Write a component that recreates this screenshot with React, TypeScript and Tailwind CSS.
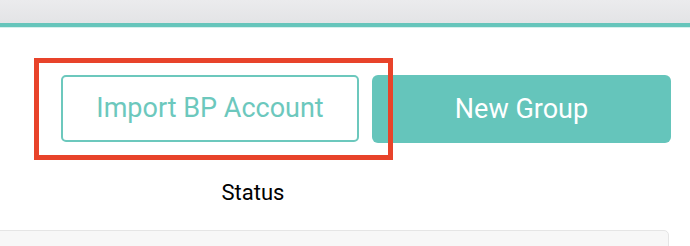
export default function App() {
  return (
    <div className="relative h-[246px] w-[690px] overflow-hidden bg-white" style={{ fontFamily: "Roboto, 'Liberation Sans', sans-serif" }}>
      <div className="h-[23px] bg-gradient-to-b from-[#ebebed] to-[#e3e4e6]" />
      <div className="h-[4px] bg-[#66c5bb]" />
      <div className="h-px bg-[#d6f0ec]" />

      <div className="relative mt-[47px] flex gap-[13px] pl-[61px]">
        <button className="flex h-[67px] w-[298px] items-center justify-center rounded-[5px] border-[2.5px] border-[#6cc8bd] bg-white text-[27px] text-[#6cc8bd]">
          Import BP Account
        </button>
        <button className="flex h-[68px] w-[299px] items-center justify-center rounded-[6px] bg-[#65c5bb] text-[27px] text-white">
          New Group
        </button>
        <div className="pointer-events-none absolute left-[34px] top-[-17px] h-[102px] w-[359px] border-[5px] border-[#e8432a]" />
      </div>

      <div className="mt-[39px] w-[506px] text-center text-[22px] leading-none text-black">
        Status
      </div>

      <div className="ml-[-10px] mt-[26px] h-[40px] w-[679px] rounded-tr-[5px] border border-[#e5e5e5] bg-[#f7f7f7]" />
    </div>
  );
}
